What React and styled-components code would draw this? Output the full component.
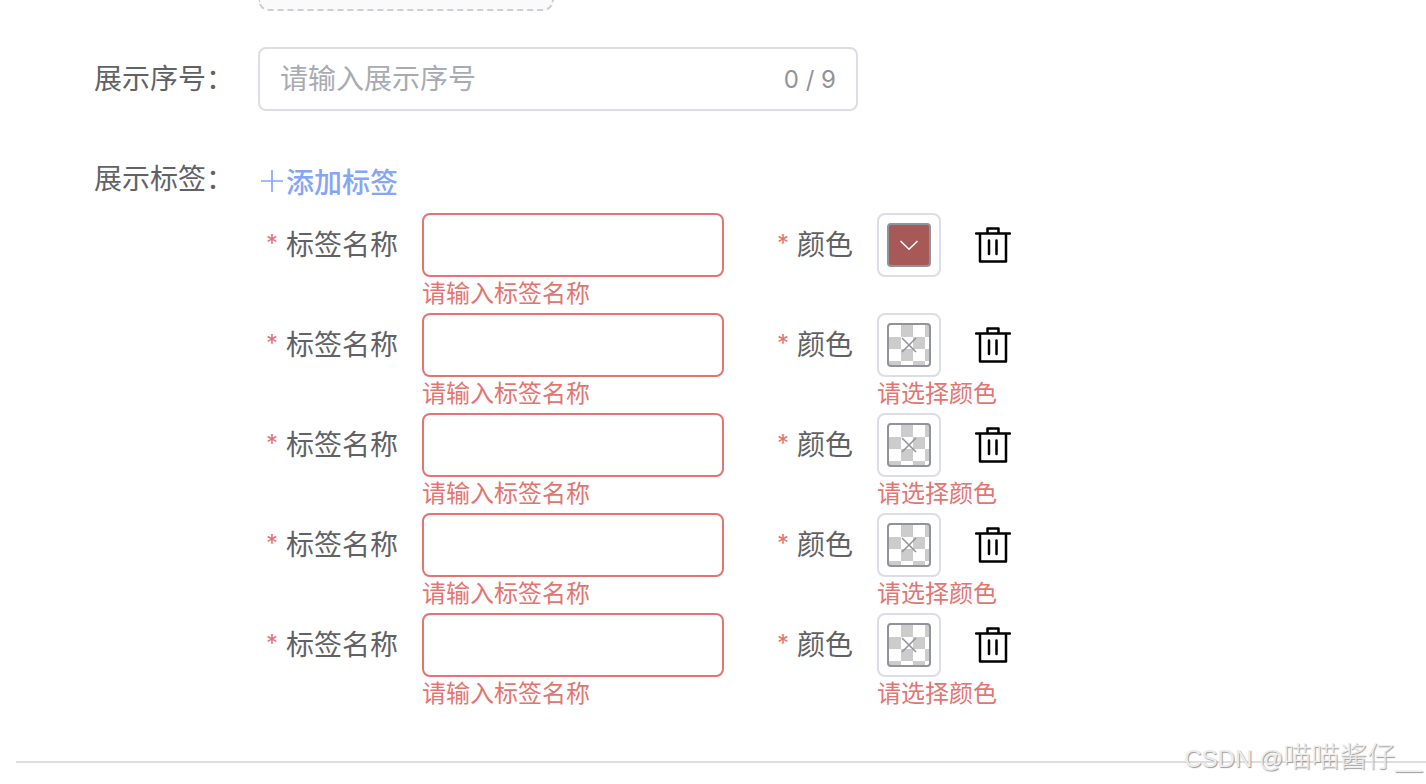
import { useState } from "react";
import styled, { createGlobalStyle } from "styled-components";

const colors = {
  text: "#606266",
  placeholder: "#a8abb2",
  info: "#909399",
  border: "#dcdde5",
  danger: "#e47470",
  primary: "#85a5f9",
};

const initialTags = [
  { id: 1, name: "", color: "#a75957" },
  { id: 2, name: "", color: "" },
  { id: 3, name: "", color: "" },
  { id: 4, name: "", color: "" },
  { id: 5, name: "", color: "" },
];

function ColorPicker({ id, color }) {
  return (
    <PickerTrigger type="button" id={id}>
      <Swatch $color={color}>
        <svg width="20" height="20" viewBox="0 0 20 20" fill="none">
          {color ? (
            <path d="M1.5 6L10 14.2L18.5 6" stroke="#fff" strokeWidth="1.5" />
          ) : (
            <path
              d="M3 3L17 17M17 3L3 17"
              stroke={colors.info}
              strokeWidth="1.5"
            />
          )}
        </svg>
      </Swatch>
    </PickerTrigger>
  );
}

function TagRow({ tag, onChange, onRemove }) {
  return (
    <Row>
      <Field>
        <RequiredLabel htmlFor={`name-${tag.id}`}>标签名称</RequiredLabel>
        <Control>
          <NameInput
            id={`name-${tag.id}`}
            value={tag.name}
            onChange={(e) => onChange(tag.id, e.target.value)}
          />
          {!tag.name && <ErrorText>请输入标签名称</ErrorText>}
        </Control>
      </Field>
      <Field>
        <RequiredLabel htmlFor={`color-${tag.id}`}>颜色</RequiredLabel>
        <Control>
          <ColorPicker id={`color-${tag.id}`} color={tag.color} />
          {!tag.color && <ErrorText>请选择颜色</ErrorText>}
        </Control>
      </Field>
      <DeleteButton
        type="button"
        aria-label="删除"
        onClick={() => onRemove(tag.id)}
      >
        <svg width="36" height="38" viewBox="0 0 36 38" fill="none">
          <path
            d="M1 7.5H35M12.5 7V2.5H23.5V7M5 8V35.5H31V8M14 14.5V28M21.5 14.5V28"
            stroke="#000"
            strokeWidth="2.5"
            strokeLinejoin="round"
            strokeLinecap="round"
          />
        </svg>
      </DeleteButton>
    </Row>
  );
}

export default function App() {
  const [order, setOrder] = useState("");
  const [tags, setTags] = useState(initialTags);

  const addTag = () => {
    setTags([...tags, { id: Date.now(), name: "", color: "" }]);
  };
  const changeTag = (id, name) => {
    setTags(tags.map((t) => (t.id === id ? { ...t, name } : t)));
  };
  const removeTag = (id) => {
    setTags(tags.filter((t) => t.id !== id));
  };

  return (
    <>
      <GlobalStyle />
      <Page>
        <Form>
          <UploadBox />
          <FormItem>
            <FormLabel htmlFor="order">展示序号：</FormLabel>
            <OrderBox>
              <input
                id="order"
                placeholder="请输入展示序号"
                maxLength={9}
                value={order}
                onChange={(e) => setOrder(e.target.value)}
              />
              <Count>{order.length} / 9</Count>
            </OrderBox>
          </FormItem>
          <FormItem>
            <FormLabel as="span">展示标签：</FormLabel>
            <Tags>
              <AddButton type="button" onClick={addTag}>
                <svg width="28" height="28" viewBox="0 0 28 28" fill="none">
                  <path
                    d="M14 3V25M3 14H25"
                    stroke="currentColor"
                    strokeWidth="1.7"
                  />
                </svg>
                添加标签
              </AddButton>
              {tags.map((tag) => (
                <TagRow
                  key={tag.id}
                  tag={tag}
                  onChange={changeTag}
                  onRemove={removeTag}
                />
              ))}
            </Tags>
          </FormItem>
        </Form>
        <Divider />
        <Watermark>
          CSDN @<span>喵喵酱仔</span>__
        </Watermark>
      </Page>
    </>
  );
}

const GlobalStyle = createGlobalStyle`
  * {
    box-sizing: border-box;
  }
  body {
    margin: 0;
    background: #fff;
    overflow-x: hidden;
  }
  body, button, input {
    font-family: "Noto Sans CJK SC", sans-serif;
    font-size: 28px;
    color: ${colors.text};
  }
  svg {
    display: block;
    flex: none;
  }
`;

const Page = styled.div`
  position: relative;
  min-height: 100vh;
`;

const Form = styled.form`
  display: flex;
  flex-direction: column;
  gap: 36px;
  padding-bottom: 48px;
`;

const UploadBox = styled.div`
  width: 296px;
  height: 11px;
  margin-left: 258px;
  border: 2px dashed #cdced6;
  border-top: 0;
  border-radius: 0 0 12px 12px;
  background: #fafafa;
`;

const FormItem = styled.div`
  display: flex;
  align-items: flex-start;
`;

const FormLabel = styled.label`
  flex: none;
  width: 258px;
  padding-right: 24px;
  line-height: 61px;
  text-align: right;
`;

const OrderBox = styled.div`
  display: flex;
  align-items: center;
  width: 600px;
  height: 64px;
  padding: 0 20px;
  border: 2px solid ${colors.border};
  border-radius: 8px;

  input {
    flex: 1;
    min-width: 0;
    height: 60px;
    padding: 0 0 4px;
    border: 0;
    outline: 0;
    background: none;
    &::placeholder {
      color: ${colors.placeholder};
      opacity: 1;
    }
  }
`;

const Count = styled.span`
  font-family: Inter, sans-serif;
  font-size: 24px;
  color: ${colors.info};
`;

const Tags = styled.div`
  flex: 1;
  padding-top: 16px;
`;

const AddButton = styled.button`
  display: flex;
  align-items: center;
  height: 36px;
  margin-bottom: 14px;
  padding: 0;
  border: 0;
  background: none;
  font-weight: 500;
  line-height: 34px;
  color: ${colors.primary};
  cursor: pointer;
`;

const Row = styled.div`
  display: flex;
  align-items: flex-start;
  height: 100px;
`;

const Field = styled.div`
  display: flex;
  margin-left: 8px;

  & + & {
    margin-left: 53px;
  }
`;

const RequiredLabel = styled.label`
  display: flex;
  padding-right: 24px;
  line-height: 61px;
  white-space: nowrap;

  &::before {
    content: "*";
    width: 12px;
    margin-right: 8px;
    font-family: Inter, sans-serif;
    font-size: 24px;
    color: ${colors.danger};
  }
`;

const Control = styled.div`
  display: flex;
  flex-direction: column;
`;

const NameInput = styled.input`
  width: 302px;
  height: 64px;
  padding: 0 20px;
  border: 2px solid ${colors.danger};
  border-radius: 8px;
  outline: 0;
`;

const ErrorText = styled.span`
  width: 0;
  padding-top: 3px;
  font-size: 24px;
  line-height: 24px;
  white-space: nowrap;
  color: ${colors.danger};
`;

const PickerTrigger = styled.button`
  display: grid;
  place-items: center;
  width: 64px;
  height: 64px;
  padding: 0;
  border: 2px solid ${colors.border};
  border-radius: 8px;
  background: #fff;
  cursor: pointer;
`;

const Swatch = styled.span`
  display: grid;
  place-items: center;
  width: 44px;
  height: 44px;
  border: 2px solid ${colors.info};
  border-radius: 4px;
  background: ${({ $color }) =>
    $color ||
    "repeating-conic-gradient(#ccc 0 25%, #fff 0 50%) 0 0 / 24px 24px"};
`;

const DeleteButton = styled.button`
  display: grid;
  place-items: center;
  width: 36px;
  height: 64px;
  margin-left: 34px;
  padding: 0;
  border: 0;
  background: none;
  cursor: pointer;
`;

const Divider = styled.hr`
  height: 2px;
  margin: 0 0 0 16px;
  border: 0;
  background: ${colors.border};
`;

const Watermark = styled.div`
  position: absolute;
  right: 4px;
  bottom: 5px;
  font-family: "Liberation Sans", "Noto Sans CJK SC", sans-serif;
  font-size: 24px;
  line-height: 40px;
  color: #ececec;
  text-shadow: 1px 1px 1px #999;

  span {
    font-size: 28px;
    font-weight: 300;
  }
`;
